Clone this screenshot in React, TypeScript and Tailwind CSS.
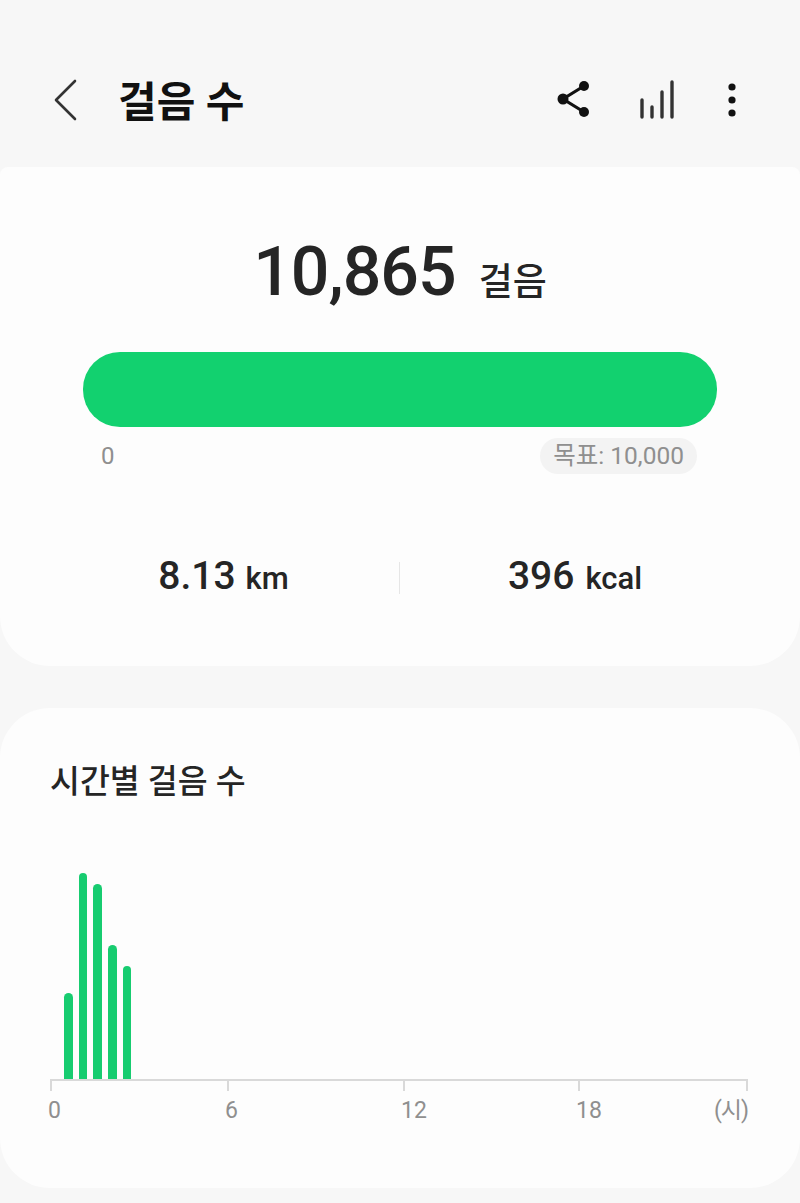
import React from 'react';

const KO = "font-['Roboto','Noto_Sans_CJK_KR',sans-serif]";

const bars = [86, 206, 195, 134, 113];
const ticks = [177, 176, 176, 168];

export default function App() {
  return (
    <div className={`${KO} w-[800px] h-[1203px] overflow-hidden bg-[#f7f7f7] text-[#252525]`}>
      {/* Header */}
      <header className="h-[167px] flex items-start pt-[78px]">
        <svg width="26" height="42" viewBox="0 0 26 42" fill="none" className="ml-[52px] mt-[1px]">
          <path d="M23 2 L4 21 L23 40" stroke="#333" strokeWidth="2.6" strokeLinecap="round" strokeLinejoin="round" />
        </svg>
        <h1 className="ml-[40px] mt-[2px] text-[42px] leading-[46px] font-semibold text-[#111]">걸음 수</h1>
        <div className="ml-auto flex items-start">
          <svg width="34" height="38" viewBox="0 0 34 38" fill="none" className="mt-[2px]">
            <path d="M27 6 L6 19 L27 32" stroke="#111" strokeWidth="3.2" />
            <circle cx="27" cy="6" r="5" fill="#111" />
            <circle cx="6" cy="19" r="5.5" fill="#111" />
            <circle cx="27" cy="32" r="5" fill="#111" />
          </svg>
          <svg width="36" height="40" viewBox="0 0 36 40" fill="none" className="ml-[48px] mt-[2px]">
            <g stroke="#333" strokeWidth="3.4" strokeLinecap="round">
              <path d="M3 20 V37" />
              <path d="M13 27 V37" />
              <path d="M23 12 V37" />
              <path d="M33 2 V37" />
            </g>
          </svg>
          <svg width="12" height="36" viewBox="0 0 12 36" fill="#111" className="ml-[51px] mr-[62px] mt-[4px]">
            <circle cx="6" cy="5" r="3.6" />
            <circle cx="6" cy="18" r="3.6" />
            <circle cx="6" cy="31" r="3.6" />
          </svg>
        </div>
      </header>

      {/* Summary card */}
      <section className="h-[499px] bg-[#fdfdfd] rounded-t-[8px] rounded-b-[50px] pt-[63px]">
        <div className="flex justify-center items-baseline h-[84px]">
          <span className="text-[68px] leading-[84px] font-medium tracking-[-1px]">10,865</span>
          <span className="ml-[23px] text-[37px] leading-[40px] font-medium">걸음</span>
        </div>
        <div className="mt-[38px] mx-[83px] h-[75px] rounded-[37px] bg-[#12d16f]" />
        <div className="mt-[11px] mx-[83px] flex items-center justify-between">
          <span className="ml-[18px] text-[24px] leading-[36px] text-[#8f8f8f]">0</span>
          <span className="mr-[20px] h-[36px] px-[13px] rounded-full bg-[#f3f3f3] text-[24.5px] leading-[36px] text-[#8f8f8f]">목표: 10,000</span>
        </div>
        <div className="mt-[80px] flex items-center">
          <div className="w-[399px] flex justify-center items-baseline pl-[48px]">
            <span className="text-[39px] leading-[44px] font-medium">8.13</span>
            <span className="ml-[10px] text-[31px] leading-[44px] font-medium">km</span>
          </div>
          <div className="w-px h-[32px] bg-[#e6e6e6]" />
          <div className="flex-1 flex justify-center items-baseline pr-[50px]">
            <span className="text-[39px] leading-[44px] font-medium">396</span>
            <span className="ml-[11px] text-[31px] leading-[44px] font-medium">kcal</span>
          </div>
        </div>
      </section>

      {/* Hourly card */}
      <section className="mt-[42px] h-[480px] bg-[#fdfdfd] rounded-[50px] pt-[55px]">
        <h2 className="ml-[50px] text-[32.5px] leading-[38px] font-medium">시간별 걸음 수</h2>
        <div className="mt-[72px] ml-[50px] w-[698px]">
          <div className="h-[206px] flex items-end gap-[6.2px] pl-[14px]">
            {bars.map((h, i) => (
              <div key={i} className="w-[8.5px] rounded-t-full bg-[#17cc70]" style={{ height: h }} />
            ))}
          </div>
          <div className="flex h-[12px] border-t-2 border-r-2 border-[#d9d9d9]">
            {ticks.map((w, i) => (
              <div key={i} className="h-full border-l-2 border-[#d9d9d9]" style={{ width: w }} />
            ))}
          </div>
          <div className="mt-[5px] -ml-[2px] flex text-[23px] leading-[30px] text-[#8f8f8f]">
            <span className="w-[177px] shrink-0">0</span>
            <span className="w-[176px] shrink-0">6</span>
            <span className="w-[175px] shrink-0">12</span>
            <span className="w-[138px] shrink-0">18</span>
            <span className="shrink-0 tracking-[-1px]">(시)</span>
          </div>
        </div>
      </section>
    </div>
  );
}
